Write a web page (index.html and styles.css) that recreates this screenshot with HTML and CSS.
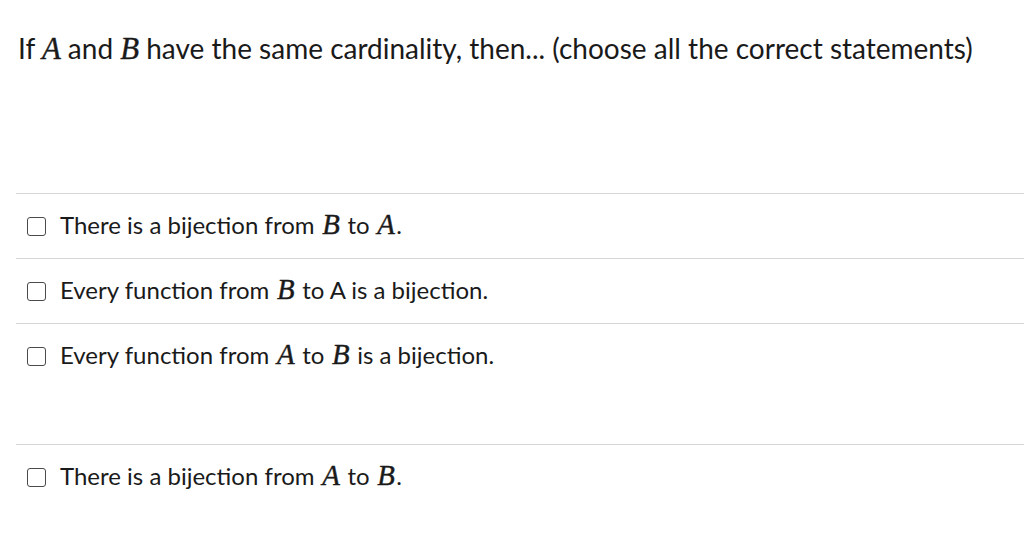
FILE: index.html
```html
<!DOCTYPE html>
<html>
<head>
<meta charset="utf-8">
<link rel="stylesheet" href="styles.css">
</head>
<body>
<div class="question">
  <p class="prompt">If <span class="m">A</span> and <span class="m">B</span> have the same cardinality, then... (choose all the correct statements)</p>
  <ul class="options">
    <li class="option"><span class="box"></span><span class="label">There is a bijection from <span class="m">B</span> to <span class="m">A</span>.</span></li>
    <li class="option"><span class="box"></span><span class="label">Every function from <span class="m">B</span> to A is a bijection.</span></li>
    <li class="option tall"><span class="box"></span><span class="label">Every function from <span class="m">A</span> to <span class="m">B</span> is a bijection.</span></li>
    <li class="option"><span class="box"></span><span class="label">There is a bijection from <span class="m">A</span> to <span class="m">B</span>.</span></li>
  </ul>
</div>
</body>
</html>
```
FILE: styles.css
```css
html, body {
  margin: 0;
  padding: 0;
  background: #ffffff;
}
body {
  font-family: Lato, "Noto Sans", sans-serif;
  color: #1a1a1a;
}
.question {
  padding: 0 0 0 16px;
}
.prompt {
  margin: 0;
  padding: 30px 0 0 2px;
  height: 193px;
  box-sizing: border-box;
  font-size: 28px;
  line-height: 36px;
}
.m {
  font-family: "Liberation Serif", "DejaVu Serif", serif;
  font-style: italic;
  font-size: 1.1em;
  line-height: 1;
  -webkit-text-stroke: 0.4px #1a1a1a;
}
.options {
  list-style: none;
  margin: 0;
  padding: 0;
}
.option {
  display: flex;
  align-items: center;
  gap: 14px;
  height: 65px;
  border-top: 1px solid #d6d6d6;
  padding-left: 11px;
  box-sizing: border-box;
  font-size: 24px;
}
.option .m {
  font-size: 1.2em;
  margin: 0 1.5px;
}
.option.tall {
  height: 121px;
  padding-bottom: 56px;
}
.box {
  width: 19px;
  height: 19px;
  box-sizing: border-box;
  border: 1.5px solid #4a4a4a;
  border-radius: 3px;
  flex: none;
}
.label {
  line-height: 28px;
  margin-bottom: 4px;
}
```
